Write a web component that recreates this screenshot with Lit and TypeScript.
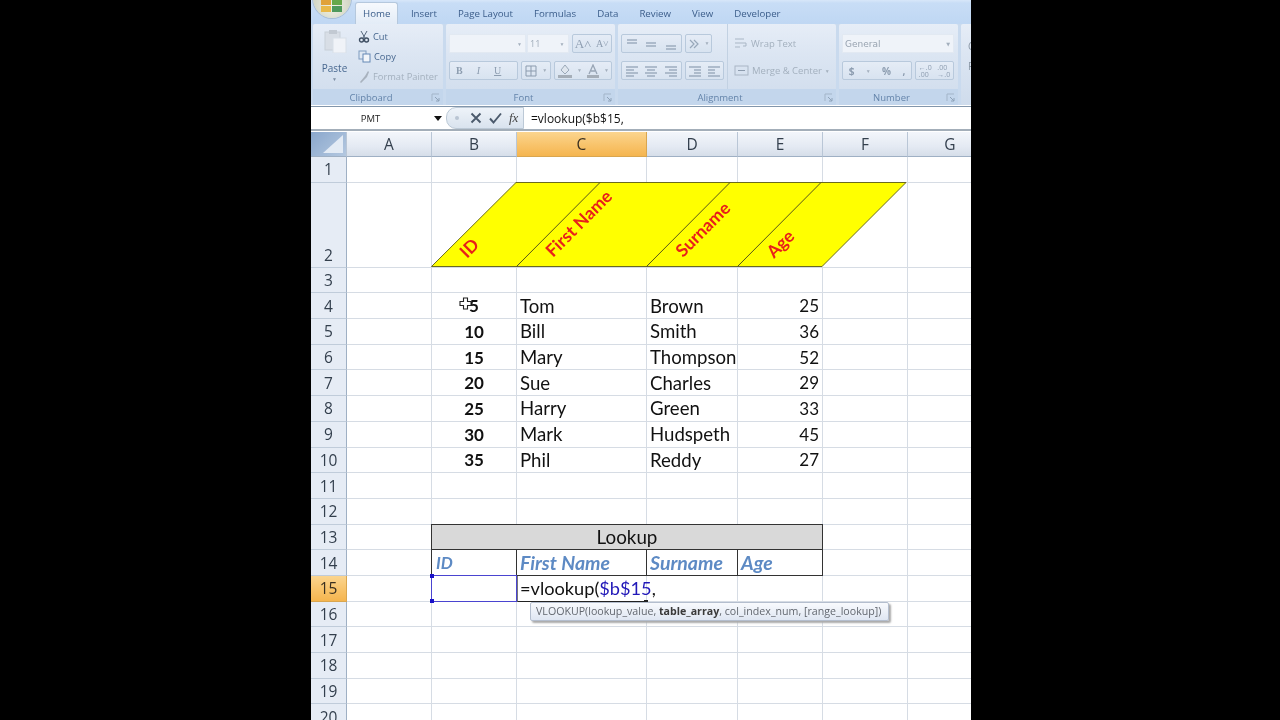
import { LitElement, html, css, svg } from "lit";
import { customElement } from "lit/decorators.js";

const COLS = ["A", "B", "C", "D", "E", "F", "G"];
const PEOPLE: [number, string, string, number][] = [
  [5, "Tom", "Brown", 25],
  [10, "Bill", "Smith", 36],
  [15, "Mary", "Thompson", 52],
  [20, "Sue", "Charles", 29],
  [25, "Harry", "Green", 33],
  [30, "Mark", "Hudspeth", 45],
  [35, "Phil", "Reddy", 27],
];

const launcher = html`<svg class="launch" width="9" height="9" viewBox="0 0 9 9"><path d="M1 8V1h7" fill="none" stroke="#a3b5c9"/><path d="M4 4l4 4M8 5v3H5" fill="none" stroke="#8ea2b8"/></svg>`;
const lines = (ys: [number, number, number][]) => html`<svg width="16" height="14" viewBox="0 0 16 14">${ys.map(([y, a, b]) => svg`<path d="M${a} ${y}H${b}" stroke="#98a8ba" stroke-width="1.4"/>`)}</svg>`;

@customElement("app-root")
export class AppRoot extends LitElement {
  static styles = css`
    :host { display: block; width: 1280px; height: 720px; background: #000; overflow: hidden; }
    .app { position: relative; width: 660px; height: 720px; margin-left: 311px; background: #fff; overflow: hidden; font-family: "Open Sans", sans-serif; filter: blur(0.35px); }
    .tabs { display: flex; align-items: flex-end; height: 24px; padding-left: 44px; background: linear-gradient(#d8e7f9 0, #c8ddf6 3px, #bfd7f3 100%); font-size: 9.7px; color: #3b5d8a; }
    .tab { padding: 0 10.500px 3px; line-height: 14px; white-space: nowrap; }
    .tab.on { padding: 4px 7px 3px 7px; background: linear-gradient(#f6f9fd, #e3ecf7); border: 1px solid #b5c8dd; border-bottom: 0; border-radius: 3px 3px 0 0; margin-right: 2px; }
    .orb { position: absolute; left: 2px; top: -22px; width: 38px; height: 40px; border-radius: 50%; background: radial-gradient(circle at 50% 70%, #f3f3e8, #d2d6c4 55%, #a9bccf 100%); box-shadow: 0 0 0 1px #a8bdd6; display: flex; align-items: flex-end; justify-content: center; padding-bottom: 5px; box-sizing: border-box; }
    .ribbon { display: flex; gap: 3px; height: 81px; padding: 0 0 0 2px; background: #c9daee; overflow: hidden; }
    .group { display: flex; flex-direction: column; flex: none; background: linear-gradient(#e6edf7, #dbe5f2 40%, #cfdcec); border-radius: 2px; }
    .gbody { flex: 1; min-height: 0; display: flex; }
    .glabel { position: relative; height: 16px; flex: none; box-sizing: border-box; padding: 1px 14px 0 0; background: #c3d6ec; color: #6484aa; font-size: 9.5px; line-height: 15px; text-align: center; }
    .launch { position: absolute; right: 3px; top: 4px; }
    .clip { width: 130px; }
    .paste { width: 43px; flex: none; display: flex; flex-direction: column; align-items: center; padding-top: 6px; color: #47678f; font-size: 10px; line-height: 12px; }
    .paste span { margin-top: 9px; }
    .paste i { font-style: normal; font-size: 5px; line-height: 10px; color: #7d8ea3; }
    .small { display: flex; flex-direction: column; gap: 5px; padding-top: 5px; margin-left: 2px; font-size: 9.300px; color: #47678f; }
    .small div { display: flex; align-items: center; gap: 3px; height: 15px; white-space: nowrap; }
    .small .off { color: #a3b0be; }
    .font { width: 169px; }
    .align { width: 218px; }
    .num { width: 119px; }
    .next { flex: 1; color: #8b98a6; font-size: 10px; padding: 12px 0 0 7px; line-height: 20px; }
    .stack { flex: 1; display: flex; flex-direction: column; gap: 8px; padding: 10px 3px 0; }
    .row { display: flex; gap: 3px; height: 19px; }
    .field { background: #eff3f9; border: 1px solid #e2e9f2; box-sizing: border-box; display: flex; align-items: center; justify-content: space-between; padding: 0 3px 0 2px; font-size: 9px; color: #a0acb9; }
    .btn { border: 1px solid #b8c9dc; border-radius: 2px; box-sizing: border-box; display: flex; align-items: center; justify-content: space-around; color: #8d9db0; font-size: 10px; font-family: "Liberation Serif", serif; background: linear-gradient(#e5ecf6, #d8e3f0); }
    .biu { justify-content: flex-start; gap: 14px; padding-left: 6px; }
    .caret { font-size: 5px; color: #a3afbd; }
    .alignwrap { display: flex; flex: 1; }
    .acol { display: flex; flex-direction: column; gap: 8px; padding: 10px 0 0 3px; }
    .wrap { margin-left: 3px; padding: 10px 0 0 6px; border-left: 1px solid #c2d1e2; display: flex; flex-direction: column; gap: 8px; font-size: 9.5px; color: #a3b0be; white-space: nowrap; }
    .wrap div { display: flex; align-items: center; gap: 3px; height: 19px; }
    .namebar { display: flex; align-items: center; margin-top: 1px; border-top: 1px solid #8296ab; border-bottom: 2px solid #a3aeb9; height: 22px; background: #fff; }
    .name { width: 133px; flex: none; position: relative; text-align: center; font-size: 9.5px; padding-right: 14px; box-sizing: border-box; color: #222; }
    .name i { position: absolute; right: 2px; top: 4px; width: 0; height: 0; border: 4px solid transparent; border-top: 5px solid #111; }
    .fx { width: 78px; height: 22px; flex: none; box-sizing: border-box; display: flex; align-items: center; gap: 7px; padding-left: 4px; border: 1px solid #bcc9d6; border-radius: 10px 0 0 10px; background: linear-gradient(#eef3f9, #d9e3ee); margin-left: 2px; }
    .fx em { font: italic 13px "Liberation Serif", serif; color: #444; }
    .formula { padding-left: 7px; font: 12px "Open Sans", sans-serif; color: #111; }
    .gridbox { position: relative; margin-top: 1px; }
    .sheet { display: grid; grid-template-columns: 36px 85px 85px 130px 91px 85px 85px 85px; grid-template-rows: 25px 25.7px 85px repeat(18, 25.7px); font-family: Lato, sans-serif; font-size: 17px; color: #111; }
    .ch, .rh { display: flex; align-items: center; justify-content: center; background: linear-gradient(#f3f6fb, #e4eaf3 60%, #d6dee9); border-right: 1px solid #b9c6d6; border-bottom: 1px solid #9fb0c4; box-sizing: border-box; color: #333f4d; font-family: "Open Sans", sans-serif; font-size: 15.500px; }
    .rh { background: #e6ecf5; border-right: 1px solid #9fb0c4; border-bottom: 1px solid #c0ccda; }
    .rh.tall { align-items: flex-end; padding-bottom: 1px; }
    .corner { background: linear-gradient(135deg, #8aa7cc, #b4c8e0); position: relative; overflow: hidden; }
    .corner svg { position: absolute; right: 3px; bottom: 3px; }
    .hot { background: linear-gradient(#fbd58f, #f8c36a 55%, #f5b54f); border-color: #d9a64f; color: #3a3020; }
    .c { display: flex; align-items: center; border-right: 1px solid #d6dce4; border-bottom: 1px solid #d6dce4; box-sizing: border-box; white-space: nowrap; padding: 0 3px; min-width: 0; }
    .t { font-size: 18.600px; }
    .b { justify-content: center; font-weight: 700; }
    .e { justify-content: flex-end; }
    .lookup { grid-column: span 4; justify-content: center; background: #d9d9d9; border: 1px solid #333; margin: -1px 0 0 -1px; font-size: 18.800px; }
    .hd { color: #5d8ac4; font-weight: 700; font-style: italic; font-size: 19.500px; border-right: 1px solid #333; border-bottom: 1px solid #333; }
    .hd.first { border-left: 1px solid #333; margin-left: -1px; font-size: 17px; padding-left: 4px; }
    .sel { border: 1px solid #4a44d0; position: relative; z-index: 1; margin: -1px 0 0 -1px; }
    .sel i { position: absolute; width: 4px; height: 4px; background: #1a12c8; }
    .tl { left: -2px; top: -2px; } .bl { left: -2px; bottom: -2px; }
    .edit { overflow: visible; border-left: 1px solid #777; border-bottom: 1.500px solid #222; padding-left: 2px; position: relative; font-size: 18.200px; z-index: 2; }
    .edit b { font-weight: 400; color: #2118b8; }
    .edit i { position: absolute; right: -2px; bottom: -3px; width: 4px; height: 4px; background: #222; }
    .diag { position: absolute; left: 120px; top: 50px; pointer-events: none; }
    .diag text { font: 700 17.500px "Lato", sans-serif; fill: #e8201a; }
    .tip { position: absolute; left: 219px; top: 470px; width: 359px; height: 19px; box-sizing: border-box; padding-left: 5px; background: linear-gradient(#f8fafd, #dfe6f2); border: 1px solid #b4bece; border-radius: 2px; box-shadow: 2px 2px 2px #aaa; font: 10.650px/17px "Open Sans", sans-serif; color: #62676f; white-space: nowrap; z-index: 3; }
    .tip b { color: #3a3a3a; }
    .cursor { position: absolute; left: 148px; top: 165px; z-index: 3; }
  `;

  private cell(cls: string, t: unknown = "") {
    return html`<div class="c ${cls}">${t}</div>`;
  }

  private ribbon() {
    return html`
      <div class="ribbon">
        <div class="group clip">
          <div class="gbody">
            <div class="paste">
              <svg width="24" height="23" viewBox="0 0 24 23"><rect x="2" y="2" width="15" height="18" fill="#d8dee6" stroke="#c8cfd8"/><rect x="6" y="0" width="8" height="4" fill="#c2c9d2"/><rect x="10" y="8" width="13" height="15" fill="#f0f3f8" stroke="#d8dfe8"/></svg>
              <span>Paste</span><i>▼</i>
            </div>
            <div class="small">
              <div><svg width="12" height="13" viewBox="0 0 12 13"><path d="M3 1l4 7M9 1L5 8" stroke="#56677c" fill="none"/><circle cx="3.500" cy="10" r="2" fill="none" stroke="#3f4f63" stroke-width="1.400"/><circle cx="8.500" cy="10" r="2" fill="none" stroke="#3f4f63" stroke-width="1.400"/></svg>Cut</div>
              <div><svg width="13" height="13" viewBox="0 0 13 13"><rect x="1" y="1" width="7" height="8" fill="#dfe8f3" stroke="#7f9cc0"/><rect x="5" y="4" width="7" height="8" fill="#f1f5fa" stroke="#6488b5"/></svg>Copy</div>
              <div class="off"><svg width="12" height="13" viewBox="0 0 12 13"><path d="M2 12l5-6 3-5 1 1-2 5-6 6z" fill="#a8b2be"/></svg>Format Painter</div>
            </div>
          </div>
          <div class="glabel">Clipboard${launcher}</div>
        </div>

        <div class="group font">
          <div class="gbody stack">
            <div class="row">
              <div class="field" style="width:78px"><span></span><span class="caret">▼</span></div>
              <div class="field" style="width:42px;margin-left:-2px"><span>11</span><span class="caret">▼</span></div>
              <div class="btn" style="width:41px;font-size:13px">A˄<span style="font-size:10px">A˅</span></div>
            </div>
            <div class="row">
              <div class="btn biu" style="width:70px"><b>B</b><i>I</i><u>U</u></div>
              <div class="btn" style="width:30px"><svg width="12" height="12" viewBox="0 0 12 12"><path d="M1 1h10v10H1zM6 1v10M1 6h10" fill="none" stroke="#8b9bae"/></svg><span class="caret">▼</span></div>
              <div class="btn" style="width:59px">
                <svg width="16" height="14" viewBox="0 0 16 14"><path d="M8 1l4 5-4 4-4-4z" fill="#dfe6ee" stroke="#9aa8b8"/><rect x="1" y="11" width="14" height="3" fill="#a5aeb8"/></svg>
                <span class="caret">▼</span>
                <svg width="14" height="14" viewBox="0 0 14 14"><path d="M3 10L7 1l4 9M5 7h4" fill="none" stroke="#98a5b5" stroke-width="1.300"/><rect x="1" y="11" width="12" height="3" fill="#a5aeb8"/></svg>
                <span class="caret">▼</span>
              </div>
            </div>
          </div>
          <div class="glabel">Font${launcher}</div>
        </div>

        <div class="group align">
          <div class="gbody alignwrap">
            <div class="acol">
              <div class="row">
                <div class="btn" style="width:61px">${lines([[3, 3, 13], [6, 3, 13]])}${lines([[6, 3, 13], [9, 3, 13]])}${lines([[9, 3, 13], [12, 3, 13]])}</div>
                <div class="btn" style="width:27px"><svg width="14" height="12" viewBox="0 0 14 12"><path d="M2 2l4 4-4 4M6 2l4 4-4 4" fill="none" stroke="#98a8ba" stroke-width="1.200"/></svg><span class="caret">▼</span></div>
              </div>
              <div class="row">
                <div class="btn" style="width:61px">${lines([[3, 2, 14], [6, 2, 10], [9, 2, 14], [12, 2, 10]])}${lines([[3, 2, 14], [6, 4, 12], [9, 2, 14], [12, 4, 12]])}${lines([[3, 2, 14], [6, 6, 14], [9, 2, 14], [12, 6, 14]])}</div>
                <div class="btn" style="width:39px">${lines([[3, 2, 14], [6, 7, 14], [9, 7, 14], [12, 2, 14]])}${lines([[3, 2, 14], [6, 2, 9], [9, 2, 9], [12, 2, 14]])}</div>
              </div>
            </div>
            <div class="wrap">
              <div><svg width="14" height="13" viewBox="0 0 14 13"><path d="M1 2h9M1 6h11v3H9M1 10h5" fill="none" stroke="#a9b6c5"/></svg>Wrap Text</div>
              <div><svg width="15" height="13" viewBox="0 0 15 13"><rect x="1" y="2" width="13" height="9" fill="none" stroke="#a9b6c5"/><path d="M4 6.500h7" stroke="#8c9bad"/></svg>Merge &amp; Center <span class="caret">▼</span></div>
            </div>
          </div>
          <div class="glabel">Alignment${launcher}</div>
        </div>

        <div class="group num">
          <div class="gbody stack">
            <div class="row"><div class="field" style="width:112px;color:#98a3b0;font-family:'DejaVu Sans',sans-serif"><span>General</span><span class="caret">▼</span></div></div>
            <div class="row">
              <div class="btn" style="width:70px;font-family:'Open Sans',sans-serif"><b>$</b><span class="caret">▼</span><b>%</b><b>,</b></div>
              <div class="btn" style="width:39px;font-size:7px;line-height:7px;font-family:'Open Sans',sans-serif"><span>←.0<br />.00</span><span>.00<br />→.0</span></div>
            </div>
          </div>
          <div class="glabel">Number${launcher}</div>
        </div>

        <div class="group next"><div>C</div><div>Fo</div></div>
      </div>`;
  }

  private rows() {
    const out: unknown[] = [];
    for (let r = 1; r <= 20; r++) {
      const hot = r === 15;
      out.push(html`<div class="rh ${r === 2 ? "tall" : ""} ${hot ? "hot" : ""}">${r}</div>`);
      const p = r >= 4 && r <= 10 ? PEOPLE[r - 4] : null;
      if (r === 13) {
        out.push(this.cell(""), html`<div class="c lookup">Lookup</div>`, this.cell(""), this.cell(""));
      } else if (r === 14) {
        out.push(this.cell(""), this.cell("hd first", "ID"), this.cell("hd", "First Name"), this.cell("hd", "Surname"), this.cell("hd", "Age"), this.cell(""), this.cell(""));
      } else if (r === 15) {
        out.push(
          this.cell(""),
          html`<div class="c sel"><i class="tl"></i><i class="bl"></i></div>`,
          html`<div class="c edit">=vlookup(<b>$b$15</b>,<i></i></div>`,
          this.cell(""), this.cell(""), this.cell(""), this.cell(""),
        );
      } else {
        out.push(
          this.cell(""),
          this.cell("b", p ? p[0] : ""),
          this.cell("t", p ? p[1] : ""),
          this.cell("t", p ? p[2] : ""),
          this.cell("e", p ? p[3] : ""),
          this.cell(""), this.cell(""),
        );
      }
    }
    return out;
  }

  render() {
    return html`
      <div class="app">
        <div class="tabs">
          <div class="tab on">Home</div>
          ${["Insert", "Page Layout", "Formulas", "Data", "Review", "View", "Developer"].map((t) => html`<div class="tab">${t}</div>`)}
        </div>
        <div class="orb">
          <svg width="24" height="14" viewBox="0 0 24 14"><rect x="1" y="0" width="10" height="6" fill="#e0a23a"/><rect x="12" y="0" width="10" height="6" fill="#67a84a"/><rect x="1" y="7" width="10" height="6" fill="#e8b94a"/><rect x="12" y="7" width="10" height="6" fill="#4f9a5c"/></svg>
        </div>
        ${this.ribbon()}
        <div class="namebar">
          <div class="name">PMT<i></i></div>
          <div class="fx">
            <svg width="12" height="12" viewBox="0 0 12 12"><circle cx="6" cy="6" r="2" fill="#b9c5d3"/></svg>
            <svg width="12" height="12" viewBox="0 0 12 12"><path d="M1.500 1.500l9 9M10.500 1.500l-9 9" stroke="#4b5a6c" stroke-width="1.900"/></svg>
            <svg width="13" height="12" viewBox="0 0 13 12"><path d="M1 6.500l3.500 4L12 1.500" fill="none" stroke="#4b5a6c" stroke-width="1.900"/></svg>
            <em>fx</em>
          </div>
          <div class="formula">=vlookup($b$15,</div>
        </div>
        <div class="gridbox">
          <div class="sheet">
            <div class="ch corner"><svg width="20" height="18" viewBox="0 0 20 18"><path d="M20 0v18H0z" fill="#e3ebf5"/></svg></div>
            ${COLS.map((c, i) => html`<div class="ch ${i === 2 ? "hot" : ""}">${c}</div>`)}
            ${this.rows()}
          </div>
          <svg class="diag" width="476" height="87" viewBox="0 0 476 87">
            <path d="M.5 84.500L85 .5H475L391 84.500z" fill="#ffff00" stroke="#6b6b1e"/>
            <path d="M85.500 84.500L169 .5M215.500 84.500L299 .5M306.500 84.500L390 .5" stroke="#55551a" fill="none"/>
            <text transform="translate(36 77) rotate(-45)">ID</text>
            <text transform="translate(122 76) rotate(-45)">First Name</text>
            <text transform="translate(252 76) rotate(-45)">Surname</text>
            <text transform="translate(343 77) rotate(-45)">Age</text>
          </svg>
          <div class="tip">VLOOKUP(lookup_value, <b>table_array</b>, col_index_num, [range_lookup])</div>
          <svg class="cursor" width="13" height="13" viewBox="0 0 13 13"><path d="M4.500 1h4v3.500H12v4H8.500V12h-4V8.500H1v-4h3.500z" fill="#fff" stroke="#222" stroke-width="1.100"/></svg>
        </div>
      </div>`;
  }
}
